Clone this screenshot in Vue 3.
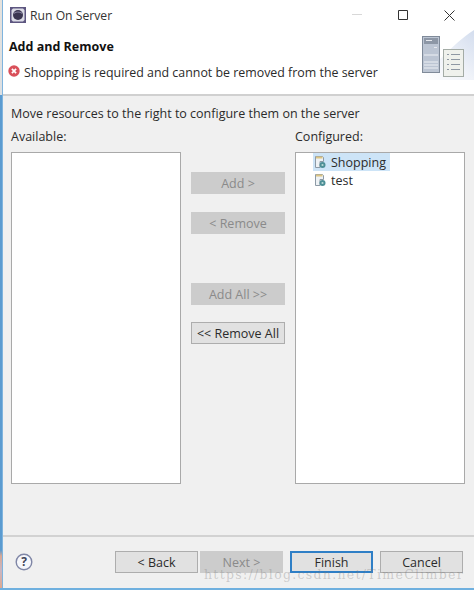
<template>
  <div class="window">
    <div class="titlebar">
      <svg class="app-icon" width="16" height="16" viewBox="0 0 16 16">
        <path d="M0 0h16v16H0z" fill="#5d5680" />
        <path d="M3 1.500h10l1.500 1.500v10L13 14.500H3L1.500 13V3z" fill="#dcdce6" />
        <circle cx="8" cy="8" r="5" fill="#3b3651" />
        <path d="M4 6.500c1-2 7-2 8 0" stroke="#8f8aa8" stroke-width="1.200" fill="none" />
      </svg>
      <span class="title">Run On Server</span>
      <div class="controls">
        <svg width="10" height="10" viewBox="0 0 10 10"><path d="M0 4.500h10" stroke="#d8d8d8" stroke-width="1" /></svg>
        <svg width="10" height="10" viewBox="0 0 10 10"><path d="M.5.500h9v9h-9z" fill="none" stroke="#333" stroke-width="1" /></svg>
        <svg width="11" height="11" viewBox="0 0 11 11"><path d="M.5.500l10 10M10.500.500l-10 10" stroke="#333" stroke-width="1" /></svg>
      </div>
    </div>

    <div class="banner">
      <div class="banner-text">
        <h1>Add and Remove</h1>
        <div class="message">
          <svg class="error-icon" width="12" height="12" viewBox="0 0 12 12">
            <circle cx="6" cy="6" r="5.700" fill="#d9505a" />
            <path d="M3.900 3.900l4.200 4.200M8.100 3.900l-4.200 4.200" stroke="#fff" stroke-width="1.700" />
          </svg>
          <span>Shopping is required and cannot be removed from the server</span>
        </div>
      </div>
      <div class="banner-art">
        <svg width="56" height="50" viewBox="0 0 56 50">
          <defs>
            <linearGradient id="glow" x1="0" y1="1" x2="1" y2="0">
              <stop offset="0" stop-color="#fff" />
              <stop offset=".5" stop-color="#f0f3f9" />
              <stop offset="1" stop-color="#d3ddee" />
            </linearGradient>
          </defs>
          <path d="M0 48C14 40 34 14 56 0V50H0z" fill="url(#glow)" />
          <rect x="4.500" y="6.500" width="17" height="36" fill="#bcc5d3" stroke="#7f8a99" />
          <rect x="6" y="8" width="14" height="6" fill="#8d97a6" />
          <path d="M8 10.500h6M16 17.500h3" stroke="#e6e9ee" stroke-width="1" />
          <path d="M6 25h14M6 32h14M6 35h14M6 38h14" stroke="#eef1f5" stroke-width="1" />
          <rect x="25.500" y="19.500" width="20" height="27" fill="#eff1ec" stroke="#a4aca6" />
          <path d="M29 24.500h2M33 24.500h9M29 29.500h2M33 29.500h9M29 34.500h2M33 34.500h9M29 39.500h2M33 39.500h9" stroke="#8f98a3" stroke-width="1" />
        </svg>
      </div>
    </div>

    <div class="content">
      <p class="intro">Move resources to the right to configure them on the server</p>
      <div class="columns">
        <div class="column">
          <label>Available:</label>
          <div class="list"></div>
        </div>
        <div class="actions">
          <button v-for="b in moveButtons" :key="b.label" :class="b.cls" class="btn" :disabled="b.disabled">{{ b.label }}</button>
        </div>
        <div class="column">
          <label>Configured:</label>
          <div class="list tree">
            <div v-for="m in modules" :key="m.name" class="tree-item" :class="{ selected: m.selected }">
              <svg width="14" height="14" viewBox="0 0 14 14">
                <path d="M2.500 1.500h7l1 1v4H7v6H2.500z" fill="#eef2f5" stroke="#8d9aa6" />
                <path d="M3 1.500h6.500v2H3z" fill="#dcc583" />
                <circle cx="9.500" cy="10" r="3" fill="#4d8f96" />
                <circle cx="9.500" cy="10" r="1.100" fill="#bcdcd8" />
              </svg>
              <span>{{ m.name }}</span>
            </div>
          </div>
        </div>
      </div>
    </div>

    <div class="footer">
      <svg class="help" width="18" height="18" viewBox="0 0 18 18">
        <circle cx="9" cy="9" r="7.800" fill="#f6f7fb" stroke="#7f86a6" stroke-width="1.400" />
        <text x="9" y="13.300" text-anchor="middle" class="help-mark">?</text>
      </svg>
      <div class="footer-buttons">
        <button class="btn wide">&lt; Back</button>
        <button class="btn wide" disabled>Next &gt;</button>
        <button class="btn wide primary">Finish</button>
        <button class="btn wide cancel">Cancel</button>
      </div>
    </div>

    <div class="watermark">https://blog.csdn.net/TimeClimber</div>
  </div>
</template>

<script setup>
const moveButtons = [
  { label: 'Add >', disabled: true, cls: 'add' },
  { label: '< Remove', disabled: true, cls: 'remove' },
  { label: 'Add All >>', disabled: true, cls: 'add-all' },
  { label: '<< Remove All', disabled: false, cls: 'remove-all' }
]

const modules = [
  { name: 'Shopping', selected: true },
  { name: 'test', selected: false }
]
</script>

<style>
html, body {
  margin: 0;
  background: #fff;
}
</style>

<style scoped>
.window {
  position: relative;
  box-sizing: border-box;
  width: 474px;
  height: 590px;
  display: flex;
  flex-direction: column;
  padding-left: 3px;
  border-bottom: 2px solid #6fb0df;
  background:
    linear-gradient(to right, transparent 2px, #7fb4de 2px),
    linear-gradient(to bottom, #e6e2dc 0, #dcdfe2 95px, #5b9bd0 95px, #5b9bd0 550px, #d9a894 556px, #c9b6c2 570px, #e0a88e 588px);
  color: #2b2b2b;
  font-family: "Open Sans", "Noto Sans", sans-serif;
  font-size: 12.5px;
  overflow: hidden;
}

.titlebar {
  height: 30px;
  flex: none;
  display: flex;
  align-items: center;
  background: #fff;
  padding-left: 7px;
}

.app-icon {
  margin-right: 4px;
}

.title {
  font-size: 12.2px;
  color: #333;
}

.controls {
  margin-left: auto;
  display: flex;
  align-items: center;
  gap: 36px;
  padding-right: 19px;
}

.banner {
  height: 66px;
  flex: none;
  display: flex;
  background: #fff;
  border-bottom: 2px solid #d0d0d0;
  box-sizing: border-box;
  padding-left: 6px;
}

.banner-text {
  flex: auto;
}

h1 {
  margin: 8px 0 0;
  font-size: 12.5px;
  font-weight: 700;
  color: #111;
}

.message {
  display: flex;
  align-items: center;
  margin-top: 9px;
  font-size: 12.4px;
  white-space: nowrap;
}

.error-icon {
  margin: -4px 4px 0 -1px;
}

.banner-art {
  flex: none;
}

.content {
  flex: auto;
  background: #f0f0f0;
  padding: 9px 8px 0 8px;
}

.intro {
  margin: 0;
}

.columns {
  display: flex;
  margin-top: 6px;
}

.column {
  display: flex;
  flex-direction: column;
  width: 170px;
}

.column label {
  height: 24px;
}

.list {
  box-sizing: border-box;
  height: 332px;
  background: #fff;
  border: 1px solid #a9a9a9;
}

.tree {
  padding-left: 17px;
}

.tree-item {
  display: flex;
  align-items: center;
  gap: 4px;
  width: 77px;
  height: 18px;
}

.tree-item.selected {
  background: #cde4f7;
}

.actions {
  display: flex;
  flex-direction: column;
  width: 94px;
  margin: 0 10px;
  padding-top: 44px;
}

.btn {
  box-sizing: border-box;
  height: 22px;
  padding: 0;
  font: inherit;
  color: #2b2b2b;
  background: #e1e1e1;
  border: 1px solid #adadad;
}

.btn:disabled {
  color: #8a8a8a;
  background: #cccccc;
  border-color: #cccccc;
}

.remove {
  margin-top: 18px;
}

.add-all {
  margin-top: 49px;
}

.remove-all {
  margin-top: 17px;
}

.footer {
  height: 53px;
  flex: none;
  box-sizing: border-box;
  display: flex;
  align-items: center;
  background: #f0f0f0;
  border-top: 2px solid #d2d2d2;
  padding: 0 11px 1px 12px;
}

.help-mark {
  font-family: "Open Sans", sans-serif;
  font-size: 12px;
  font-weight: 700;
  fill: #3f4458;
}

.footer-buttons {
  margin-left: auto;
  display: flex;
}

.wide {
  width: 83px;
}

.wide + .wide {
  margin-left: 2px;
}

.wide.primary {
  margin-left: 7px;
  border: 2px solid #2f7fc6;
}

.wide.cancel {
  margin-left: 7px;
}

.watermark {
  position: absolute;
  left: 204px;
  top: 567px;
  font-family: "DejaVu Serif", serif;
  font-size: 12.5px;
  letter-spacing: 1.3px;
  color: rgba(120, 120, 120, 0.32);
  white-space: nowrap;
  pointer-events: none;
}
</style>
